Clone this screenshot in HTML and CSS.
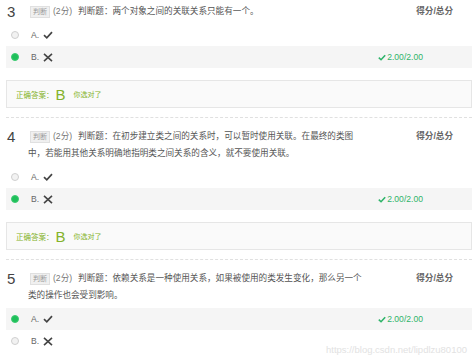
FILE: index.html
```html
<!DOCTYPE html>
<html lang="zh-CN">
<head>
<meta charset="utf-8">
<link rel="stylesheet" href="styles.css">
</head>
<body>
<div class="page">
  <div class="q">
    <div class="q-head">
      <span class="num">3</span>
      <div class="q-text"><span class="tag">判断</span><span class="pts">(2分)</span>判断题：两个对象之间的关联关系只能有一个。</div>
      <span class="score-label">得分/总分</span>
    </div>
    <div class="opt"><span class="radio"></span><span class="letter">A.</span><svg class="ico" width="10" height="8" viewBox="0 0 10 8"><path d="M1 4.2 L3.8 6.8 L9 1.2" fill="none" stroke="#444" stroke-width="1.7"/></svg></div>
    <div class="opt sel"><span class="radio on"></span><span class="letter">B.</span><svg class="ico" width="10" height="9" viewBox="0 0 10 9"><path d="M1 0.8 L9 8.2 M9 0.8 L1 8.2" fill="none" stroke="#444" stroke-width="1.6"/></svg><span class="score"><svg width="8" height="7" viewBox="0 0 10 8"><path d="M1 4.2 L3.8 6.8 L9 1.2" fill="none" stroke="#2fb46a" stroke-width="2"/></svg>2.00/2.00</span></div>
    <div class="answer">正确答案：<span class="ans">B</span><span class="ok">你选对了</span></div>
  </div>
  <div class="sep"></div>
  <div class="q">
    <div class="q-head">
      <span class="num">4</span>
      <div class="q-text"><span class="tag">判断</span><span class="pts">(2分)</span>判断题：在初步建立类之间的关系时，可以暂时使用关联。在最终的类图中，若能用其他关系明确地指明类之间关系的含义，就不要使用关联。</div>
      <span class="score-label">得分/总分</span>
    </div>
    <div class="opt"><span class="radio"></span><span class="letter">A.</span><svg class="ico" width="10" height="8" viewBox="0 0 10 8"><path d="M1 4.2 L3.8 6.8 L9 1.2" fill="none" stroke="#444" stroke-width="1.7"/></svg></div>
    <div class="opt sel"><span class="radio on"></span><span class="letter">B.</span><svg class="ico" width="10" height="9" viewBox="0 0 10 9"><path d="M1 0.8 L9 8.2 M9 0.8 L1 8.2" fill="none" stroke="#444" stroke-width="1.6"/></svg><span class="score"><svg width="8" height="7" viewBox="0 0 10 8"><path d="M1 4.2 L3.8 6.8 L9 1.2" fill="none" stroke="#2fb46a" stroke-width="2"/></svg>2.00/2.00</span></div>
    <div class="answer">正确答案：<span class="ans">B</span><span class="ok">你选对了</span></div>
  </div>
  <div class="sep"></div>
  <div class="q">
    <div class="q-head">
      <span class="num">5</span>
      <div class="q-text"><span class="tag">判断</span><span class="pts">(2分)</span>判断题：依赖关系是一种使用关系，如果被使用的类发生变化，那么另一个类的操作也会受到影响。</div>
      <span class="score-label">得分/总分</span>
    </div>
    <div class="opt sel"><span class="radio on"></span><span class="letter">A.</span><svg class="ico" width="10" height="8" viewBox="0 0 10 8"><path d="M1 4.2 L3.8 6.8 L9 1.2" fill="none" stroke="#444" stroke-width="1.7"/></svg><span class="score"><svg width="8" height="7" viewBox="0 0 10 8"><path d="M1 4.2 L3.8 6.8 L9 1.2" fill="none" stroke="#2fb46a" stroke-width="2"/></svg>2.00/2.00</span></div>
    <div class="opt"><span class="radio"></span><span class="letter">B.</span><svg class="ico" width="10" height="9" viewBox="0 0 10 9"><path d="M1 0.8 L9 8.2 M9 0.8 L1 8.2" fill="none" stroke="#444" stroke-width="1.6"/></svg></div>
  </div>
  <div class="watermark">https://blog.csdn.net/lipdlzu80100</div>
</div>
</body>
</html>
```

FILE: styles.css
```css
html, body {
  margin: 0;
  padding: 0;
  background: #fff;
}
body {
  font-family: "Liberation Sans", "Noto Sans CJK SC", sans-serif;
  color: #555;
  width: 474px;
  height: 361px;
  overflow: hidden;
}
.page {
  position: relative;
  padding: 3px 2px 0 6px;
  height: 358px;
}
.q-head {
  display: flex;
  align-items: flex-start;
}
.num {
  width: 22px;
  padding-left: 1px;
  box-sizing: border-box;
  font-size: 15px;
  line-height: 17px;
  color: #444;
}
.q-text {
  width: 335px;
  font-size: 8.6px;
  line-height: 17px;
  color: #555;
}
.tag {
  display: inline-block;
  margin-left: 2px;
  margin-right: 3px;
  padding: 0 2px;
  height: 10px;
  line-height: 10px;
  font-size: 7px;
  color: #999;
  background: #f0f0f0;
  border: 1px solid #e0e0e0;
  vertical-align: middle;
}
.pts {
  margin-right: 6px;
  color: #777;
}
.score-label {
  margin-left: auto;
  margin-right: 19px;
  font-size: 8.6px;
  line-height: 17px;
  font-weight: bold;
  color: #666;
}
.opt {
  display: flex;
  align-items: center;
  height: 22px;
  padding-left: 5px;
  font-size: 8.6px;
  color: #666;
}
.q-head + .opt {
  margin-top: 4px;
}
.opt.sel {
  background: #f5f5f5;
}
.radio {
  width: 6px;
  height: 6px;
  border-radius: 50%;
  background: #f2f2f2;
  border: 1px solid #cfcfcf;
  margin-right: 12px;
}
.radio.on {
  background: #1fbf5a;
  border-color: #3ccc72;
}
.letter {
  margin-right: 4px;
}
.ico {
  display: block;
}
.score {
  margin-left: auto;
  margin-right: 49px;
  display: flex;
  align-items: center;
  color: #2fb46a;
  font-size: 8.6px;
}
.score svg {
  margin-right: 1px;
}
.answer {
  margin-top: 12px;
  height: 26px;
  display: flex;
  align-items: center;
  padding-left: 9px;
  border: 1px solid #e6e6e6;
  background: #fafafa;
  font-size: 7.5px;
  color: #84b22a;
}
.ans {
  font-size: 15px;
  margin-left: 2px;
  margin-right: 8px;
}
.ok {
  font-size: 7px;
}
.sep {
  margin-top: 9px;
  margin-bottom: 10px;
  border-top: 1px dashed #e0e0e0;
}
.watermark {
  position: absolute;
  right: 7px;
  bottom: 6px;
  font-size: 9.5px;
  color: #e2e2e2;
}
```
